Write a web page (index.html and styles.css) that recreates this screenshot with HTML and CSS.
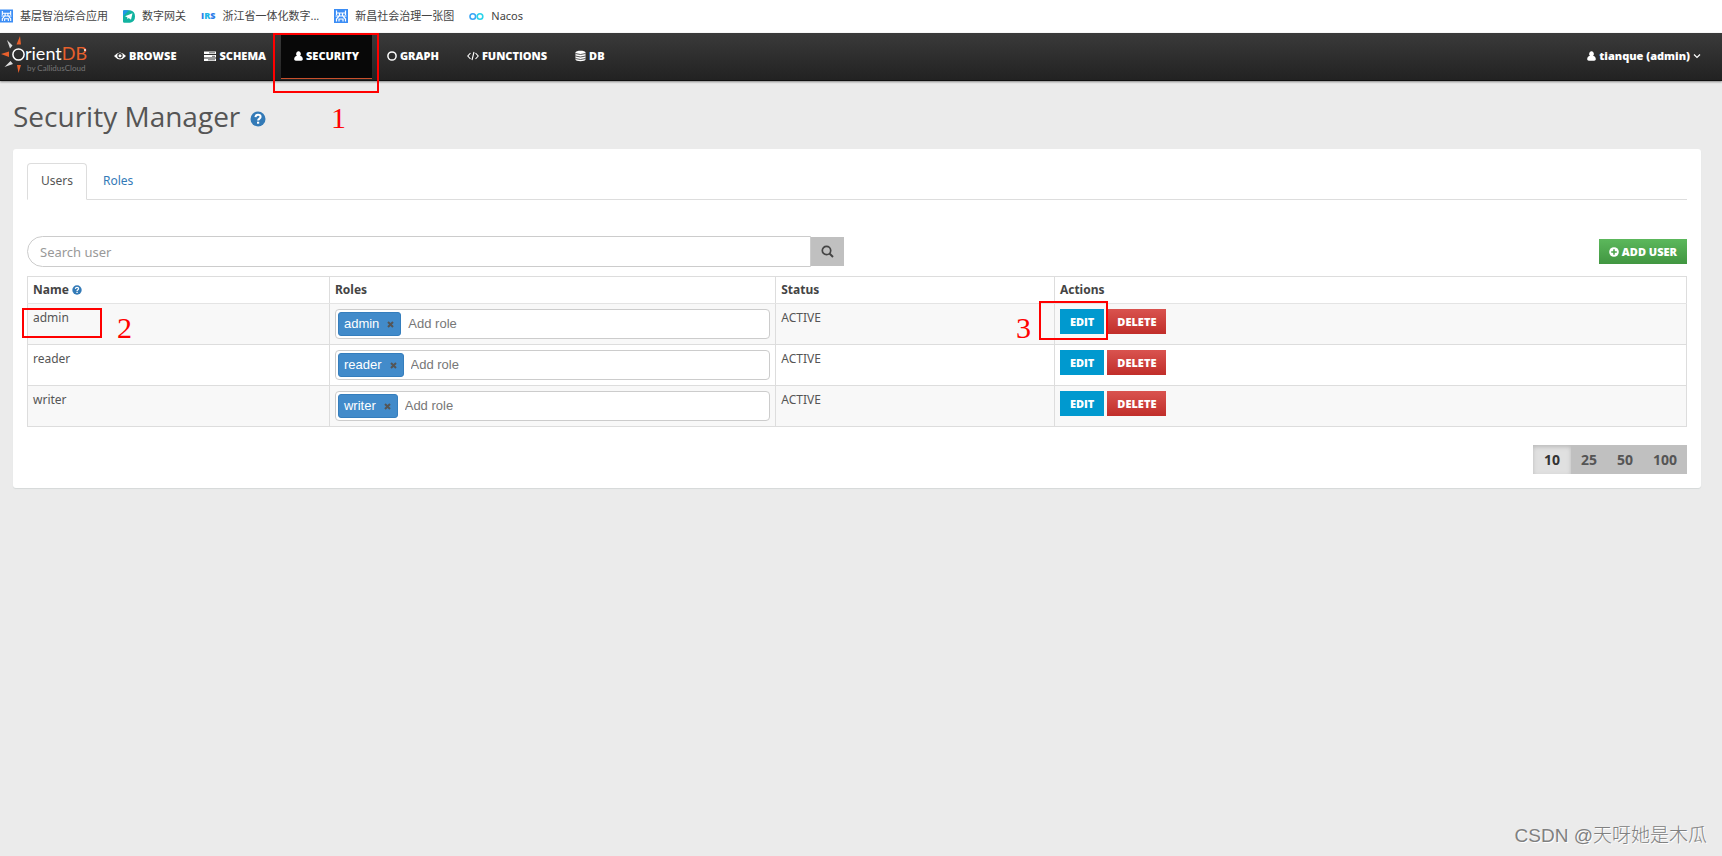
FILE: index.html
```html
<!DOCTYPE html>
<html lang="en">
<head>
<meta charset="utf-8">
<title>OrientDB Studio - Security Manager</title>
<link rel="stylesheet" href="styles.css">
</head>
<body>
<svg class="sprite" aria-hidden="true">
  <symbol id="i-user" viewBox="0 0 10 12"><path d="M5 .8a2.500 2.800 0 0 1 1.800 4.900C8.800 6 9.800 7.600 9.800 9.600 9.800 10.600 9 11.200 8 11.200H2c-1 0-1.800-.6-1.800-1.600C.2 7.600 1.200 6 3.200 5.700A2.500 2.800 0 0 1 5 .8z" fill="currentColor"/></symbol>
  <symbol id="i-help" viewBox="0 0 16 16"><circle cx="8" cy="8" r="7.500" fill="currentColor"/><path d="M5.400 6.200C5.600 4.300 6.700 3.700 8 3.700c1.500 0 2.600.9 2.600 2.200 0 1.700-2.500 1.700-2.500 3.700" fill="none" stroke="#fff" stroke-width="2"/><path d="M7 10.700h2.200v2H7z" fill="#fff"/></symbol>
  <symbol id="i-city" viewBox="0 0 14 14"><path d="M0 0h14v14H0z" fill="#3b8df5"/><path d="M2.500 1.500v4.500M11.500 1.500v4.500M2.500 4h9M1.500 7h11M2.500 12.500V10L5 7M11.500 12.500V10L9 7M5 12.500V10h4v2.500M5.500 4v3M8.500 4v3" fill="none" stroke="#fff" stroke-width="1.200"/></symbol>
</svg>

<nav class="bookmarks" aria-label="Bookmarks">
  <a href="#"><svg width="13" height="14"><use href="#i-city"/></svg>基层智治综合应用</a>
  <a href="#"><svg width="12" height="13" viewBox="0 0 12 13"><path d="M0 1.500Q0 .3 1.200.3H7Q12 1 12 6.500T7 12.700H1.200Q0 12.700 0 11.500z" fill="#12b3a0"/><path d="M0 1.500Q0 .3 1.200.3H6L0 6z" fill="#2296e8"/><path d="M2 6.300 9.500 3.300 8 9.700 5.700 8 4.500 9.300 4.300 7.300z" fill="#fff"/></svg>数字网关</a>
  <a href="#"><span class="irs">I<i>R</i>S</span>浙江省一体化数字...</a>
  <a href="#"><svg width="14" height="14"><use href="#i-city"/></svg>新昌社会治理一张图</a>
  <a href="#"><svg width="15" height="9" viewBox="0 0 15 9"><circle cx="3.800" cy="4.500" r="2.800" fill="none" stroke="#39a5f5" stroke-width="1.600"/><circle cx="11" cy="4.500" r="2.800" fill="none" stroke="#2bd3ea" stroke-width="1.600"/></svg>Nacos</a>
</nav>

<header class="navbar">
  <a href="#" class="brand" aria-label="OrientDB by CallidusCloud">
    <svg width="88" height="44" viewBox="0 0 88 44">
      <path d="M20 3l1 8.500-4.500 0zM1 21l8-2.500 0 5.500zM17 32l4 0-2.500 8z" fill="#e8602c"/>
      <path d="M7 7l5.500 5.500-2.500 3zM4.500 34l6-6 2.500 3z" fill="#ddd"/>
      <circle cx="18.500" cy="21.500" r="5.600" fill="none" stroke="#fff" stroke-width="1.500"/>
      <text x="25" y="27" class="logo-main">rient<tspan class="logo-db">DB</tspan></text>
      <circle cx="85" cy="17" r="1" fill="#fff"/>
      <text x="27" y="38" class="logo-sub">by CallidusCloud</text>
    </svg>
  </a>
  <ul class="menu">
    <li><a href="#"><svg width="12" height="12" viewBox="0 0 12 12"><path d="M0 6Q6-1 12 6 6 13 0 6z" fill="#fff"/><circle cx="6" cy="5.800" r="2.700" fill="#2c2c2c"/><circle cx="6" cy="5.800" r="1.500" fill="#fff"/></svg>BROWSE</a></li>
    <li><a href="#"><svg width="12" height="12" viewBox="0 0 12 12"><path d="M0 1.500h12v2.500H0zM0 5h12v2.500H0zM0 8.500h12V11H0z" fill="#fff"/><path d="M5 2.800h6M8 6.300h3M4 9.800h7" stroke="#555" stroke-width=".9"/></svg>SCHEMA</a></li>
    <li><a href="#" class="active"><svg width="9" height="12"><use href="#i-user"/></svg>SECURITY</a></li>
    <li><a href="#"><svg width="10" height="12" viewBox="0 0 10 12"><circle cx="5" cy="6" r="4.100" fill="none" stroke="#fff" stroke-width="1.500"/></svg>GRAPH</a></li>
    <li><a href="#"><svg width="12" height="12" viewBox="0 0 12 12"><path d="M3.500 3 .8 6l2.700 3M8.500 3l2.700 3-2.700 3M7 2 5 10" fill="none" stroke="#fff" stroke-width="1.100"/></svg>FUNCTIONS</a></li>
    <li><a href="#"><svg width="11" height="12" viewBox="0 0 11 12"><path d="M.5 2.500C.5.200 10.500.200 10.500 2.500v7C10.500 11.800.5 11.800.5 9.500z" fill="#fff"/><path d="M.5 3.500q5 2 10 0M.5 6q5 2 10 0M.5 8.500q5 2 10 0" fill="none" stroke="#2c2c2c" stroke-width=".8"/></svg>DB</a></li>
  </ul>
  <button type="button" class="account"><svg width="9" height="12"><use href="#i-user"/></svg>tianque (admin)<svg width="8" height="8" viewBox="0 0 8 8"><path d="M1 2.500 4 5.500l3-3" fill="none" stroke="#fff" stroke-width="1.200"/></svg></button>
</header>

<main class="page">
  <h1>Security Manager <a href="#" aria-label="Help"><svg width="16" height="16"><use href="#i-help"/></svg></a></h1>
  <section class="panel">
    <div class="tabs">
      <a href="#" class="tab current">Users</a>
      <a href="#" class="tab">Roles</a>
    </div>
    <div class="toolbar">
      <form class="search">
        <input type="text" placeholder="Search user" aria-label="Search user">
        <button type="button" aria-label="Search"><svg width="13" height="13" viewBox="0 0 13 13"><circle cx="5.500" cy="5.500" r="4.200" fill="none" stroke="#444" stroke-width="1.700"/><path d="m8.500 8.500 3.500 3.500" stroke="#444" stroke-width="2"/></svg></button>
      </form>
      <button type="button" class="btn btn-add"><svg width="10" height="10" viewBox="0 0 10 10"><circle cx="5" cy="5" r="4.800" fill="#fff"/><path d="M5 2.200v5.600M2.200 5h5.600" stroke="#4aa34a" stroke-width="1.500"/></svg>ADD USER</button>
    </div>
    <table class="users">
      <colgroup><col class="c-name"><col class="c-roles"><col class="c-status"><col></colgroup>
      <thead>
        <tr><th>Name <a href="#" aria-label="Help"><svg width="10" height="10"><use href="#i-help"/></svg></a></th><th>Roles</th><th>Status</th><th>Actions</th></tr>
      </thead>
      <tbody>
        <tr>
          <td>admin</td>
          <td><div class="tags"><span class="tag">admin<button type="button" aria-label="Remove admin"><svg width="7" height="7" viewBox="0 0 7 7"><path d="m1 1 5 5M6 1 1 6"/></svg></button></span><input type="text" placeholder="Add role" aria-label="Add role to admin"></div></td>
          <td>ACTIVE</td>
          <td><div class="actions"><button type="button" class="btn btn-edit">EDIT</button><button type="button" class="btn btn-delete">DELETE</button></div></td>
        </tr>
        <tr>
          <td>reader</td>
          <td><div class="tags"><span class="tag">reader<button type="button" aria-label="Remove reader"><svg width="7" height="7" viewBox="0 0 7 7"><path d="m1 1 5 5M6 1 1 6"/></svg></button></span><input type="text" placeholder="Add role" aria-label="Add role to reader"></div></td>
          <td>ACTIVE</td>
          <td><div class="actions"><button type="button" class="btn btn-edit">EDIT</button><button type="button" class="btn btn-delete">DELETE</button></div></td>
        </tr>
        <tr>
          <td>writer</td>
          <td><div class="tags"><span class="tag">writer<button type="button" aria-label="Remove writer"><svg width="7" height="7" viewBox="0 0 7 7"><path d="m1 1 5 5M6 1 1 6"/></svg></button></span><input type="text" placeholder="Add role" aria-label="Add role to writer"></div></td>
          <td>ACTIVE</td>
          <td><div class="actions"><button type="button" class="btn btn-edit">EDIT</button><button type="button" class="btn btn-delete">DELETE</button></div></td>
        </tr>
      </tbody>
    </table>
    <div class="pager">
      <button type="button" class="on">10</button><button type="button">25</button><button type="button">50</button><button type="button">100</button>
    </div>
  </section>
</main>

<div class="mark box-1"></div><span class="step step-1">1</span>
<div class="mark box-2"></div><span class="step step-2">2</span>
<div class="mark box-3"></div><span class="step step-3">3</span>
<div class="watermark">CSDN @天呀她是木瓜</div>
</body>
</html>
```
FILE: styles.css
```css
* { box-sizing: border-box; }
body {
  position: relative;
  margin: 0;
  min-height: 100vh;
  background: #ebebeb;
  color: #555;
  font: 12px/18px "Noto Sans", "Open Sans", sans-serif;
}
a { color: #337ab7; text-decoration: none; }
button, input { font: inherit; color: inherit; margin: 0; }
button { border: 0; background: none; padding: 0; }
input::placeholder { color: #999; opacity: 1; }
svg { flex: none; }
.sprite { position: absolute; width: 0; height: 0; }

.bookmarks {
  display: flex;
  align-items: center;
  gap: 15px;
  height: 33px;
  padding-bottom: 1px;
  background: #fff;
  font: 11px/16px "Noto Sans", "Noto Sans CJK SC", sans-serif;
}
.bookmarks a {
  display: flex;
  align-items: center;
  gap: 7px;
  color: #444;
  white-space: nowrap;
}
.irs { color: #2b7de9; font: 800 9px/12px "Open Sans", sans-serif; }
.irs i { color: #1fb6e8; font-style: normal; }

.navbar {
  display: flex;
  align-items: stretch;
  height: 48px;
  padding-right: 21px;
  background: linear-gradient(#3a3a3a, #222);
  border-bottom: 1px solid #111;
  box-shadow: 0 1px 2px #888;
}
.brand { width: 101px; }
.brand svg { display: block; }
.logo-main { font: 18px "Lato", sans-serif; fill: #fff; }
.logo-db { fill: #e8602c; }
.logo-sub { font: 8px "Lato", sans-serif; fill: #777; }
.menu {
  display: flex;
  flex: 1;
  gap: 2px;
  margin: 0;
  padding: 0;
  list-style: none;
}
.menu a, .account {
  display: flex;
  align-items: center;
  gap: 3px;
  height: 46px;
  padding: 0 13px;
  color: #fff;
  font: 800 11px/16px "Open Sans", sans-serif;
  white-space: nowrap;
}
.menu .active { background: #080808; border-bottom: 1px solid #c8502c; }
.account { padding: 0; }

.page { padding: 15px 21px 0 13px; }
h1 {
  display: flex;
  align-items: center;
  gap: 10px;
  margin: 0 0 13px;
  font: 28px/40px "Open Sans", sans-serif;
}
h1 a { display: flex; padding-top: 6px; }
.panel {
  padding: 14px;
  background: #fff;
  border-radius: 3px;
  box-shadow: 0 1px 1px #d5d9d9;
}
.tabs { display: flex; gap: 2px; border-bottom: 1px solid #ddd; }
.tab {
  margin-bottom: -1px;
  padding: 8px 13px 9px;
  border: 1px solid transparent;
  border-radius: 4px 4px 0 0;
}
.tab.current { color: #555; background: #fff; border-color: #ddd #ddd #fff; }
.toolbar {
  display: flex;
  justify-content: space-between;
  align-items: center;
  margin: 36px 0 9px;
}
.search { display: flex; align-items: center; width: 49.2%; }
.search input {
  flex: 1;
  min-width: 0;
  height: 31px;
  padding: 0 12px;
  border: 1px solid #ccc;
  border-radius: 16px 0 0 16px;
  font-size: 13px;
  outline: 0;
}
.search button {
  display: flex;
  align-items: center;
  justify-content: center;
  width: 33px;
  height: 29px;
  background: #c0c0c0;
}
.btn {
  display: flex;
  align-items: center;
  gap: 3px;
  height: 25px;
  padding: 0 10px;
  color: #fff;
  font: 800 11px/16px "Open Sans", sans-serif;
  white-space: nowrap;
}
.btn-add { background: linear-gradient(#5cb85c, #419641); }
.btn-edit { background: #0099cf; }
.btn-delete { background: linear-gradient(#d9534f, #c12e2a); }
.actions { display: flex; gap: 3px; }

.users { width: 100%; table-layout: fixed; border-collapse: collapse; border: 1px solid #ddd; }
.c-name { width: 18.2%; }
.c-roles { width: 26.9%; }
.c-status { width: 16.8%; }
.users th, .users td {
  padding: 5px;
  border: 1px solid #ddd;
  text-align: left;
  vertical-align: top;
}
.users th { padding: 4px 5px; border-bottom-color: #e4e4e4; font-weight: 700; color: #444; }
.users th svg { vertical-align: -1px; }
.users td { line-height: 17px; }
.users tbody tr:nth-child(odd) { background: #f8f8f8; }
.tags {
  display: flex;
  align-items: center;
  gap: 7px;
  height: 30px;
  padding: 2px;
  background: #fff;
  border: 1px solid #ccc;
  border-radius: 4px;
  font: 13px/18px "Liberation Sans", sans-serif;
}
.tags input { flex: 1; min-width: 0; padding: 0; border: 0; outline: 0; }
.tags input::placeholder { color: #777; }
.tag {
  display: flex;
  align-items: center;
  gap: 8px;
  height: 24px;
  padding: 0 6px 0 5px;
  background: #428bca;
  border: 1px solid #357ebd;
  border-radius: 3px;
  color: #fff;
}
.tag button { display: flex; }
.tag path { stroke: #555; stroke-width: 2; }

.pager { display: flex; justify-content: flex-end; margin-top: 18px; }
.pager button {
  height: 29px;
  padding: 0 10px;
  background: #c0c0c0;
  color: #555;
  font: 700 14px/18px "Open Sans", sans-serif;
}
.pager .on { padding: 0 11px; background: #e0e0e0; color: #333; box-shadow: inset 0 2px 4px #bbb; }

.mark { position: absolute; border: 2px solid #f00; }
.box-1 { left: 273px; top: 33px; width: 106px; height: 60px; }
.box-2 { left: 22px; top: 308px; width: 80px; height: 30px; }
.box-3 { left: 1039px; top: 301px; width: 69px; height: 39px; }
.step { position: absolute; color: #f00; font: 30px/30px "Liberation Serif", serif; }
.step-1 { left: 331px; top: 103px; }
.step-2 { left: 117px; top: 313px; }
.step-3 { left: 1016px; top: 313px; }
.watermark {
  position: absolute;
  right: 15px;
  bottom: 6px;
  color: #808080;
  font: 300 19px/28px "Liberation Sans", "Noto Sans CJK SC", sans-serif;
  text-shadow: 1px 1px 0 #fff;
}
```
